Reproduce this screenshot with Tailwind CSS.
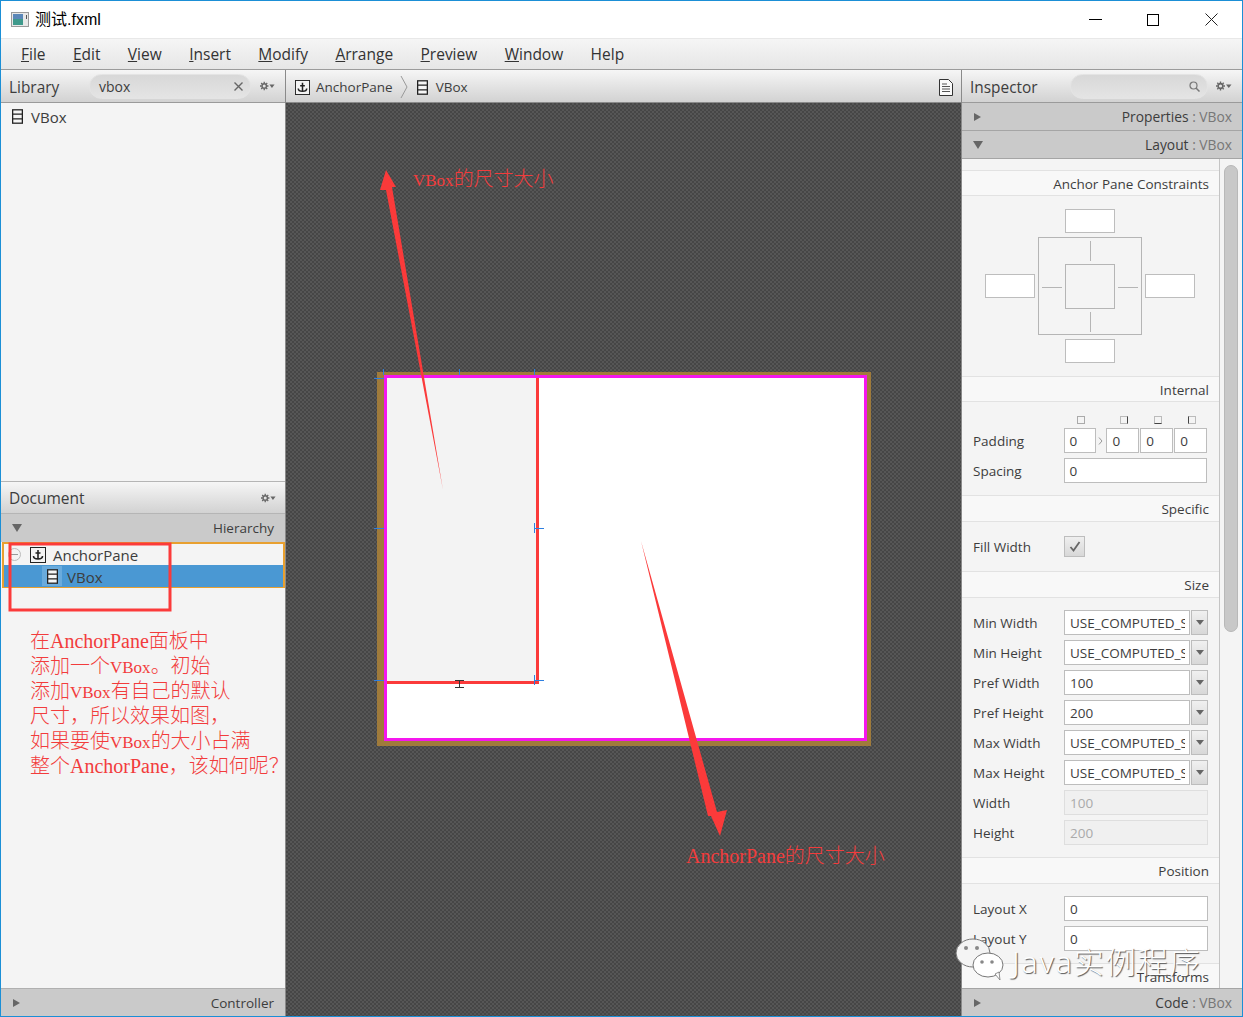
<!DOCTYPE html>
<html lang="zh-CN">
<head>
    <meta charset="UTF-8">
    <title>测试.fxml</title>
    <script src="https://cdn.jsdelivr.net/npm/@tailwindcss/browser@4"></script>
</head>
<body class="bg-[#f4f4f4]">
    <svg class="hidden">
        <symbol id="anchor" viewBox="0 0 16 16">
            <rect x="0.500" y="0.500" width="15" height="15" fill="#f4f4f4" stroke="#222"/>
            <path d="M8 3v9M5.500 6h5M3.500 9c0 2.500 2 3 4.500 3s4.500-.5 4.500-3" fill="none" stroke="#222" stroke-width="1.600"/>
        </symbol>
        <symbol id="vbox" viewBox="0 0 12 16">
            <rect x="0.700" y="0.700" width="10.600" height="14.600" fill="#f6f6f6" stroke="#222" stroke-width="1.400"/>
            <path d="M1 5.500h10M1 10.500h10" stroke="#222" stroke-width="1.400"/>
        </symbol>
        <symbol id="gear" viewBox="0 0 16 10">
            <circle cx="4.500" cy="5" r="2.400" fill="none" stroke="#666" stroke-width="1.600"/>
            <path d="M4.500 .5v1.500M4.500 8v1.500M0 5h1.500M7.500 5H9M1.300 1.800l1 1M6.700 7.200l1 1M7.700 1.800l-1 1M2.300 7.200l-1 1" stroke="#666" stroke-width="1.400"/>
            <path d="M10 3.500h5.500l-2.750 3.500z" fill="#666"/>
        </symbol>
    </svg>

    <div class="relative w-[1243px] h-[1017px] overflow-hidden border border-[#1b8fd6] font-['Open_Sans','Noto_Sans_CJK_SC',sans-serif] text-[13.500px] text-[#3d3d3d] flex flex-col">
        <!-- title bar -->
        <div class="h-[38px] shrink-0 bg-white flex items-center border-b border-[#e8e8e8]">
            <svg class="ml-[10px] w-[18px] h-[15px]" viewBox="0 0 18 15">
                <rect x="0.500" y="0.500" width="17" height="14" fill="#e8e8e8" stroke="#9a9a9a"/>
                <rect x="2" y="2" width="10" height="11" fill="#3f9a8c"/>
                <rect x="2" y="2" width="10" height="5" fill="#5b87b8"/>
                <rect x="15" y="3" width="1" height="4" fill="#555"/>
            </svg>
            <span class="ml-[6px] text-[16px] text-black font-['Liberation_Sans','Noto_Sans_CJK_SC',sans-serif]">测试.fxml</span>
            <div class="ml-auto flex items-center">
                <div class="w-[13px] h-px bg-black mr-[45px]"></div>
                <div class="w-[12px] h-[12px] border border-black mr-[46px]"></div>
                <svg class="w-[13px] h-[13px] mr-[24px]" viewBox="0 0 13 13"><path d="M.5.500l12 12M12.500.500l-12 12" stroke="#222" stroke-width="1"/></svg>
            </div>
        </div>
        <!-- menu bar -->
        <div class="h-[31px] shrink-0 bg-linear-to-b from-[#f5f5f5] to-[#e6e6e6] border-b border-[#9b9b9b] flex items-center pl-[20px] pt-[2px] gap-[27.400px] text-[15.500px] text-[#333]">
            <span><u>F</u>ile</span>
            <span><u>E</u>dit</span>
            <span><u>V</u>iew</span>
            <span><u>I</u>nsert</span>
            <span><u>M</u>odify</span>
            <span><u>A</u>rrange</span>
            <span><u>P</u>review</span>
            <span><u>W</u>indow</span>
            <span>Help</span>
        </div>

        <div class="flex-1 flex min-h-0">
            <!-- left column -->
            <div class="w-[285px] shrink-0 flex flex-col border-r border-[#8a8a8a] bg-[#f4f4f4]">
                <div class="h-[33px] shrink-0 bg-linear-to-b from-[#f6f6f6] to-[#d2d2d2] border-b border-[#9a9a9a] flex items-center pl-[8px]">
                    <span class="text-[15.400px] w-[80px] pt-[4px]">Library</span>
                    <div class="w-[162px] h-[25px] rounded-full border border-[#e4e4e4] bg-linear-to-b from-[#d8d8d8] to-[#e4e4e4] flex items-center pl-[9px] pr-[7px] text-[14px]">
                        vbox
                        <svg class="ml-auto w-[9px] h-[9px]" viewBox="0 0 9 9"><path d="M.5.500l8 8M8.500.500l-8 8" stroke="#666" stroke-width="1.400"/></svg>
                    </div>
                    <svg class="ml-[9px] w-[15px] h-[10px]"><use href="#gear"/></svg>
                </div>
                <div class="h-[378px] shrink-0 pl-[11px] pt-[3px] flex items-start">
                    <svg class="w-[11px] h-[15px] mt-[3px]"><use href="#vbox"/></svg>
                    <span class="ml-[8px] text-[15px]">VBox</span>
                </div>
                <div class="h-[33px] shrink-0 bg-linear-to-b from-[#f6f6f6] to-[#d2d2d2] border-y border-[#b5b5b5] flex items-center pl-[8px] pr-[9px]">
                    <span class="text-[15.500px] pt-[2px]">Document</span>
                    <svg class="ml-auto w-[15px] h-[10px]"><use href="#gear"/></svg>
                </div>
                <div class="h-[28px] shrink-0 bg-[#cacaca] flex items-center pl-[11px] pr-[11px] pb-px">
                    <div class="w-0 h-0 border-x-[5px] border-x-transparent border-t-[8px] border-t-[#666]"></div>
                    <span class="ml-auto pt-[2px]">Hierarchy</span>
                </div>
                <div class="h-[46px] shrink-0 ml-px border-2 border-[#e8a030] text-[15px] flex flex-col">
                    <div class="h-[21px] flex items-center pl-[4px]">
                        <div class="w-[13px] h-[13px] rounded-full border border-[#bbb] flex items-center justify-center"><div class="w-[7px] h-px bg-[#999]"></div></div>
                        <svg class="ml-[9px] w-[16px] h-[16px]"><use href="#anchor"/></svg>
                        <span class="ml-[7px] pt-[2px]">AnchorPane</span>
                    </div>
                    <div class="h-[22px] bg-[#4a98d3] flex items-center pl-[38px]">
                        <div class="w-[20px] h-[20px] bg-[#6aabdc] flex items-center justify-center"><svg class="w-[11px] h-[15px]"><use href="#vbox"/></svg></div>
                        <span class="ml-[5px] pt-[2px]">VBox</span>
                    </div>
                </div>
                <div class="flex-1"></div>
                <div class="h-[28px] shrink-0 bg-[#cacaca] border-t border-[#b0b0b0] flex items-center pl-[12px] pr-[11px]">
                    <div class="w-0 h-0 border-y-[4px] border-y-transparent border-l-[7px] border-l-[#666]"></div>
                    <span class="ml-auto pt-[2px]">Controller</span>
                </div>
            </div>

            <!-- center -->
            <div class="w-[676px] shrink-0 flex flex-col border-r border-[#8a8a8a]">
                <div class="h-[33px] shrink-0 bg-linear-to-b from-[#f6f6f6] to-[#d2d2d2] border-b border-[#8a8a8a] flex items-center pl-[9px] pr-[8px] pt-[2px]">
                    <svg class="w-[15px] h-[15px]"><use href="#anchor"/></svg>
                    <span class="ml-[6px]">AnchorPane</span>
                    <svg class="ml-[7px] w-[8px] h-[24px]" viewBox="0 0 8 24"><path d="M1 1l6 11-6 11" fill="none" stroke="#999"/></svg>
                    <svg class="ml-[9px] w-[11px] h-[15px]"><use href="#vbox"/></svg>
                    <span class="ml-[8px]">VBox</span>
                    <svg class="ml-auto w-[14px] h-[17px]" viewBox="0 0 14 17">
                        <path d="M.5.500h9l4 4v12H.5z" fill="#fafafa" stroke="#333"/>
                        <path d="M3 5h5M3 7.500h8M3 10h8M3 12.500h8" stroke="#555"/>
                    </svg>
                </div>
                <div class="relative flex-1 bg-[#4d4d4d] bg-[repeating-conic-gradient(#565656_0_25%,#464646_0_50%)] bg-[length:4px_4px]">
                    <!-- scene on the canvas -->
                    <div class="absolute left-[91px] top-[269px] w-[494px] h-[374px] bg-[#a07b3b] pl-[7px] pt-[3px] pr-[4px] pb-[5px]">
                        <div class="w-full h-full border-[3px] border-[#f516ee] bg-white">
                            <div class="w-[152px] h-[306px] bg-[#f3f3f3] border-r-[3px] border-b-[3px] border-[#fb3a3a]"></div>
                        </div>
                    </div>
                </div>
            </div>

            <!-- inspector -->
            <div class="flex-1 flex flex-col bg-[#f4f4f4] min-w-0">
                <div class="h-[33px] shrink-0 bg-linear-to-b from-[#f6f6f6] to-[#d2d2d2] border-b border-[#9a9a9a] flex items-center pl-[8px]">
                    <span class="text-[15.400px] w-[100px] pt-[4px]">Inspector</span>
                    <div class="w-[138px] h-[25px] rounded-full border border-[#e4e4e4] bg-linear-to-b from-[#d8d8d8] to-[#e4e4e4] flex items-center justify-end pr-[7px]">
                        <svg class="w-[11px] h-[11px]" viewBox="0 0 11 11"><circle cx="4.500" cy="4.500" r="3.500" fill="none" stroke="#777" stroke-width="1.200"/><path d="M7 7l3.500 3.500" stroke="#777" stroke-width="1.500"/></svg>
                    </div>
                    <svg class="ml-[8px] w-[16px] h-[10px]"><use href="#gear"/></svg>
                </div>
                <div class="h-[28px] shrink-0 bg-[#cacaca] border-b border-[#a5a5a5] flex items-center pl-[12px] pr-[10px]">
                    <div class="w-0 h-0 border-y-[4px] border-y-transparent border-l-[7px] border-l-[#666]"></div>
                    <span class="ml-auto pt-[2px] text-[13.800px]">Properties <span class="text-[#777]">: VBox</span></span>
                </div>
                <div class="h-[28px] shrink-0 bg-[#cacaca] border-b border-[#a5a5a5] flex items-center pl-[11px] pr-[10px]">
                    <div class="w-0 h-0 border-x-[5px] border-x-transparent border-t-[8px] border-t-[#666]"></div>
                    <span class="ml-auto pt-[2px] text-[13.800px]">Layout <span class="text-[#777]">: VBox</span></span>
                </div>
                <div class="flex-1 flex min-h-0">
                    <div class="w-[258px] shrink-0 border-r border-[#c4c4c4] flex flex-col overflow-hidden">
                        <div class="h-[26px] shrink-0 mt-[11px] bg-[#f8f8f8] border-y border-[#e2e2e2] flex items-center justify-end pr-[10px] pt-[2px]">Anchor Pane Constraints</div>
                        <div class="h-[180px] shrink-0 grid grid-cols-[50px_104px_50px] grid-rows-[24px_98px_24px] gap-x-[3px] gap-y-[4px] pl-[23px] pt-[13px]">
                            <div class="col-start-2 w-[50px] h-[24px] justify-self-center bg-white border border-[#bdbdbd]"></div>
                            <div class="row-start-2 col-start-1 self-center w-[50px] h-[24px] bg-white border border-[#bdbdbd]"></div>
                            <svg class="row-start-2 col-start-2" width="104" height="98" viewBox="0 0 104 98">
                                <rect x="0.500" y="0.500" width="103" height="97" fill="none" stroke="#b5b5b5"/>
                                <rect x="27.500" y="27.500" width="49" height="44" fill="none" stroke="#b5b5b5"/>
                                <path d="M52.500 4v20M52.500 75v20M4 50.500h20M80 50.500h20" stroke="#b5b5b5"/>
                            </svg>
                            <div class="row-start-2 col-start-3 self-center w-[50px] h-[24px] bg-white border border-[#bdbdbd]"></div>
                            <div class="row-start-3 col-start-2 w-[50px] h-[24px] justify-self-center bg-white border border-[#bdbdbd]"></div>
                        </div>
                        <div class="h-[26px] shrink-0 bg-[#f8f8f8] border-y border-[#e2e2e2] flex items-center justify-end pr-[10px] pt-[2px]">Internal</div>
                        <div class="h-[94px] shrink-0 pl-[11px] pr-[12px] pt-[14px] border-b border-[#e2e2e2]">
                            <div class="grid grid-cols-[33px_10px_33px_1px_33px_1px_33px] justify-start ml-[91px] h-[12px]">
                                <div class="flex justify-center"><div class="w-[8px] h-[8px] border border-[#aaa]"></div></div>
                                <div></div>
                                <div class="flex justify-center"><div class="w-[8px] h-[8px] border border-[#bbb] border-r-[#444]"></div></div>
                                <div></div>
                                <div class="flex justify-center"><div class="w-[8px] h-[8px] border border-[#bbb] border-b-[#444]"></div></div>
                                <div></div>
                                <div class="flex justify-center"><div class="w-[8px] h-[8px] border border-[#bbb] border-l-[#444]"></div></div>
                            </div>
                            <div class="flex items-center h-[25px]">
                                <span class="w-[91px] pt-[2px]">Padding</span>
                                <div class="w-[33px] h-[25px] bg-white border border-[#bdbdbd] pl-[5px] leading-[25px]">0</div>
                                <svg class="w-[10px] h-[8px]" viewBox="0 0 10 8"><path d="M3 .5l3 3.500-3 3.500" fill="none" stroke="#999"/></svg>
                                <div class="w-[33px] h-[25px] bg-white border border-[#bdbdbd] pl-[5px] leading-[25px]">0</div>
                                <div class="ml-px w-[33px] h-[25px] bg-white border border-[#bdbdbd] pl-[5px] leading-[25px]">0</div>
                                <div class="ml-px w-[33px] h-[25px] bg-white border border-[#bdbdbd] pl-[5px] leading-[25px]">0</div>
                            </div>
                            <div class="flex items-center h-[25px] mt-[5px]">
                                <span class="w-[91px] pt-[2px]">Spacing</span>
                                <div class="w-[144px] h-[25px] bg-white border border-[#bdbdbd] pl-[5px] leading-[25px]">0</div>
                            </div>
                        </div>
                        <div class="h-[26px] shrink-0 bg-[#f8f8f8] border-b border-[#e2e2e2] flex items-center justify-end pr-[10px] pt-[2px]">Specific</div>
                        <div class="h-[50px] shrink-0 flex items-center pl-[11px] border-b border-[#e2e2e2]">
                            <span class="w-[91px] pt-[2px]">Fill Width</span>
                            <div class="w-[21px] h-[21px] bg-linear-to-b from-[#efefef] to-[#d8d8d8] border border-[#bdbdbd] flex items-center justify-center">
                                <svg class="w-[12px] h-[11px]" viewBox="0 0 12 11"><path d="M1.500 6l3 3.500 6-8.500" fill="none" stroke="#666" stroke-width="1.800"/></svg>
                            </div>
                        </div>
                        <div class="h-[26px] shrink-0 bg-[#f8f8f8] border-b border-[#e2e2e2] flex items-center justify-end pr-[10px] pt-[2px]">Size</div>
                        <div class="h-[260px] shrink-0 flex flex-col gap-[5px] pl-[11px] pt-[12px] border-b border-[#e2e2e2]">
                            <div class="flex items-center h-[25px]"><span class="w-[91px] pt-[2px]">Min Width</span><div class="w-[126px] h-[25px] bg-white border border-[#bdbdbd] pl-[5px] pr-[4px] leading-[25px]"><span class="block overflow-hidden whitespace-nowrap">USE_COMPUTED_SIZE</span></div><div class="ml-px w-[17px] h-[25px] bg-linear-to-b from-[#f0f0f0] to-[#d8d8d8] border border-[#bdbdbd] flex items-center justify-center"><div class="w-0 h-0 border-x-[4px] border-x-transparent border-t-[5px] border-t-[#666]"></div></div></div>
                            <div class="flex items-center h-[25px]"><span class="w-[91px] pt-[2px]">Min Height</span><div class="w-[126px] h-[25px] bg-white border border-[#bdbdbd] pl-[5px] pr-[4px] leading-[25px]"><span class="block overflow-hidden whitespace-nowrap">USE_COMPUTED_SIZE</span></div><div class="ml-px w-[17px] h-[25px] bg-linear-to-b from-[#f0f0f0] to-[#d8d8d8] border border-[#bdbdbd] flex items-center justify-center"><div class="w-0 h-0 border-x-[4px] border-x-transparent border-t-[5px] border-t-[#666]"></div></div></div>
                            <div class="flex items-center h-[25px]"><span class="w-[91px] pt-[2px]">Pref Width</span><div class="w-[126px] h-[25px] bg-white border border-[#bdbdbd] pl-[5px] leading-[25px]">100</div><div class="ml-px w-[17px] h-[25px] bg-linear-to-b from-[#f0f0f0] to-[#d8d8d8] border border-[#bdbdbd] flex items-center justify-center"><div class="w-0 h-0 border-x-[4px] border-x-transparent border-t-[5px] border-t-[#666]"></div></div></div>
                            <div class="flex items-center h-[25px]"><span class="w-[91px] pt-[2px]">Pref Height</span><div class="w-[126px] h-[25px] bg-white border border-[#bdbdbd] pl-[5px] leading-[25px]">200</div><div class="ml-px w-[17px] h-[25px] bg-linear-to-b from-[#f0f0f0] to-[#d8d8d8] border border-[#bdbdbd] flex items-center justify-center"><div class="w-0 h-0 border-x-[4px] border-x-transparent border-t-[5px] border-t-[#666]"></div></div></div>
                            <div class="flex items-center h-[25px]"><span class="w-[91px] pt-[2px]">Max Width</span><div class="w-[126px] h-[25px] bg-white border border-[#bdbdbd] pl-[5px] pr-[4px] leading-[25px]"><span class="block overflow-hidden whitespace-nowrap">USE_COMPUTED_SIZE</span></div><div class="ml-px w-[17px] h-[25px] bg-linear-to-b from-[#f0f0f0] to-[#d8d8d8] border border-[#bdbdbd] flex items-center justify-center"><div class="w-0 h-0 border-x-[4px] border-x-transparent border-t-[5px] border-t-[#666]"></div></div></div>
                            <div class="flex items-center h-[25px]"><span class="w-[91px] pt-[2px]">Max Height</span><div class="w-[126px] h-[25px] bg-white border border-[#bdbdbd] pl-[5px] pr-[4px] leading-[25px]"><span class="block overflow-hidden whitespace-nowrap">USE_COMPUTED_SIZE</span></div><div class="ml-px w-[17px] h-[25px] bg-linear-to-b from-[#f0f0f0] to-[#d8d8d8] border border-[#bdbdbd] flex items-center justify-center"><div class="w-0 h-0 border-x-[4px] border-x-transparent border-t-[5px] border-t-[#666]"></div></div></div>
                            <div class="flex items-center h-[25px]"><span class="w-[91px] pt-[2px]">Width</span><div class="w-[144px] h-[25px] bg-[#f0f0f0] border border-[#dedede] pl-[5px] leading-[25px] text-[#aaa]">100</div></div>
                            <div class="flex items-center h-[25px]"><span class="w-[91px] pt-[2px]">Height</span><div class="w-[144px] h-[25px] bg-[#f0f0f0] border border-[#dedede] pl-[5px] leading-[25px] text-[#aaa]">200</div></div>
                        </div>
                        <div class="h-[26px] shrink-0 bg-[#f8f8f8] border-b border-[#e2e2e2] flex items-center justify-end pr-[10px] pt-[2px]">Position</div>
                        <div class="h-[80px] shrink-0 flex flex-col gap-[5px] pl-[11px] pt-[12px] border-b border-[#e2e2e2]">
                            <div class="flex items-center h-[25px]"><span class="w-[91px] pt-[2px]">Layout X</span><div class="w-[144px] h-[25px] bg-white border border-[#bdbdbd] pl-[5px] leading-[25px]">0</div></div>
                            <div class="flex items-center h-[25px]"><span class="w-[91px] pt-[2px]">Layout Y</span><div class="w-[144px] h-[25px] bg-white border border-[#bdbdbd] pl-[5px] leading-[25px]">0</div></div>
                        </div>
                        <div class="flex-1 bg-[#f8f8f8] flex items-center justify-end pr-[10px] pt-[2px]">Transforms</div>
                    </div>
                    <div class="flex-1 pl-[4px] pt-[6px]">
                        <div class="w-[14px] h-[467px] rounded-full bg-[#c8c8c8] border border-[#b8b8b8]"></div>
                    </div>
                </div>
                <div class="h-[28px] shrink-0 bg-[#cacaca] border-t border-[#a5a5a5] flex items-center pl-[12px] pr-[10px]">
                    <div class="w-0 h-0 border-y-[4px] border-y-transparent border-l-[7px] border-l-[#666]"></div>
                    <span class="ml-auto pt-[2px] text-[13.800px]">Code <span class="text-[#777]">: VBox</span></span>
                </div>
            </div>
        </div>

        <!-- annotations over the screenshot -->
        <svg class="absolute -left-px -top-px pointer-events-none" width="1243" height="1017" viewBox="0 0 1243 1017">
            <polygon points="386,170 396,187 392,187 443,490 386,190 380,190" fill="#fb3a3a"/>
            <polygon points="641,541 717,812 727,810 720,836 711,816 708,816" fill="#fb3a3a"/>
            <rect x="10" y="544" width="160" height="66" fill="none" stroke="#fb3a3a" stroke-width="3"/>
            <path d="M374 378.500h10M383.500 369v6M459.500 369v6M534.500 369v6M374 528.500h10M534 528.500h10M534.500 523v10M374 680.500h10M534 680.500h10M534.500 675v10" stroke="#2e7fe0"/>
            <path d="M455 680.500h9M459.500 681v7M455 687.500h9" stroke="#333"/>
        </svg>
        <div class="absolute left-[412px] top-[163px] text-[20px] leading-[28px] text-[#f23c3c] font-['Noto_Sans_CJK_SC',sans-serif] font-light whitespace-nowrap"><span class="font-['Liberation_Serif',serif] text-[17px] leading-none">VBox</span>的尺寸大小</div>
        <div class="absolute left-[685px] top-[840px] text-[20px] leading-[28px] text-[#f23c3c] font-['Noto_Sans_CJK_SC',sans-serif] font-light whitespace-nowrap"><span class="font-['Liberation_Serif',serif] text-[20px] leading-none">AnchorPane</span>的尺寸大小</div>
        <div class="absolute left-[29px] top-[626px] text-[20px] leading-[25px] text-[#f23c3c] font-['Noto_Sans_CJK_SC',sans-serif] font-light whitespace-nowrap">
            <div class="h-[25px]">在<span class="font-['Liberation_Serif',serif] leading-none">AnchorPane</span>面板中</div>
            <div class="h-[25px]">添加一个<span class="font-['Liberation_Serif',serif] text-[17px] leading-none">VBox</span>。初始</div>
            <div class="h-[25px]">添加<span class="font-['Liberation_Serif',serif] text-[17px] leading-none">VBox</span>有自己的默认</div>
            <div class="h-[25px]">尺寸，所以效果如图，</div>
            <div class="h-[25px]">如果要使<span class="font-['Liberation_Serif',serif] text-[17px] leading-none">VBox</span>的大小占满</div>
            <div class="h-[25px]">整个<span class="font-['Liberation_Serif',serif] leading-none">AnchorPane</span>，该如何呢？</div>
        </div>

        <!-- watermark -->
        <svg class="absolute left-[954px] top-[936px]" width="54" height="46" viewBox="0 0 54 46">
            <ellipse cx="18" cy="16" rx="17" ry="14" fill="#f4f4f4" stroke="#777" stroke-width="1"/>
            <ellipse cx="33" cy="28" rx="15" ry="12" fill="#fff" stroke="#777" stroke-width="1"/>
            <path d="M40 37l5 6-1-8z" fill="#fff" stroke="#777" stroke-width="0.800"/>
            <circle cx="11" cy="11" r="2" fill="#888"/><circle cx="22" cy="11" r="2" fill="#888"/>
            <circle cx="27" cy="25" r="1.800" fill="#888"/><circle cx="37" cy="25" r="1.800" fill="#888"/>
        </svg>
        <div class="absolute left-[1011px] top-[941px] text-[30px] leading-[40px] tracking-[2px] text-white font-['Noto_Sans','Noto_Sans_CJK_SC',sans-serif] font-light [text-shadow:1px_1px_1px_#555] whitespace-nowrap">Java实例程序</div>
    </div>
</body>
</html>
